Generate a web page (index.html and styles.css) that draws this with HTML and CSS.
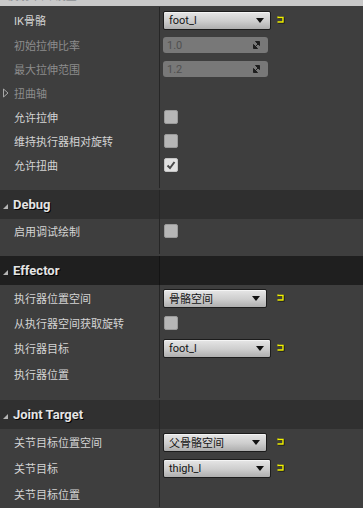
FILE: index.html
```html
<!DOCTYPE html>
<html lang="zh">
<head>
<meta charset="utf-8">
<link rel="stylesheet" href="styles.css">
</head>
<body>
<div class="topbar"><span class="topbar-text">反射平面 设置</span></div>

<div class="section first">
  <div class="row r26">
    <div class="name">IK骨骼</div>
    <div class="value">
      <div class="field"><div class="combo w108"><span>foot_l</span><i class="arrow"></i></div></div>
      <svg class="reset" width="9" height="10" viewBox="0 0 9 10"><path d="M2 2.5v-1M1.5 2.5h5.5v4.5h-5.5" fill="none" stroke="#111" stroke-width="1.6" transform="translate(0.7 0.7)"/><path d="M2 2.5v-1M1.5 2.5h5.5v4.5h-5.5" fill="none" stroke="#f2f200" stroke-width="1.4"/></svg>
    </div>
  </div>
  <div class="row">
    <div class="name dim">初始拉伸比率</div>
    <div class="value"><div class="spin"><span>1.0</span><svg class="spin-ico" width="7" height="8" viewBox="0 0 7 8"><path d="M2.5 0.5h4v4z M0.5 3.5v4h4z M1.5 6.5l4-4" fill="#1e1e1e" stroke="#1e1e1e" stroke-width="1"/></svg></div></div>
  </div>
  <div class="row">
    <div class="name dim">最大拉伸范围</div>
    <div class="value"><div class="spin"><span>1.2</span><svg class="spin-ico" width="7" height="8" viewBox="0 0 7 8"><path d="M2.5 0.5h4v4z M0.5 3.5v4h4z M1.5 6.5l4-4" fill="#1e1e1e" stroke="#1e1e1e" stroke-width="1"/></svg></div></div>
  </div>
  <div class="row">
    <div class="name dim expander"><svg class="exp-ico" width="6" height="10" viewBox="0 0 6 10"><path d="M0.5 1v8l4.5-4z" fill="none" stroke="#a8a8a8" stroke-width="1"/></svg>扭曲轴</div>
    <div class="value"></div>
  </div>
  <div class="row">
    <div class="name">允许拉伸</div>
    <div class="value"><div class="check"></div></div>
  </div>
  <div class="row">
    <div class="name">维持执行器相对旋转</div>
    <div class="value"><div class="check"></div></div>
  </div>
  <div class="row">
    <div class="name">允许扭曲</div>
    <div class="value"><div class="check on"><svg width="12" height="12" viewBox="0 0 12 12"><path d="M2.5 6.5l2.5 2.5 4.5-6" fill="none" stroke="#4a4a4a" stroke-width="2"/></svg></div></div>
  </div>
</div>

<div class="section">
  <div class="header h-debug"><i class="tri"></i>Debug</div>
  <div class="row">
    <div class="name">启用调试绘制</div>
    <div class="value"><div class="check"></div></div>
  </div>
</div>

<div class="section">
  <div class="header h-effector"><i class="tri"></i>Effector</div>
  <div class="row r26">
    <div class="name">执行器位置空间</div>
    <div class="value">
      <div class="field"><div class="combo w104"><span>骨骼空间</span><i class="arrow"></i></div></div>
      <svg class="reset" width="9" height="10" viewBox="0 0 9 10"><path d="M2 2.5v-1M1.5 2.5h5.5v4.5h-5.5" fill="none" stroke="#111" stroke-width="1.6" transform="translate(0.7 0.7)"/><path d="M2 2.5v-1M1.5 2.5h5.5v4.5h-5.5" fill="none" stroke="#f2f200" stroke-width="1.4"/></svg>
    </div>
  </div>
  <div class="row">
    <div class="name">从执行器空间获取旋转</div>
    <div class="value"><div class="check"></div></div>
  </div>
  <div class="row r26">
    <div class="name">执行器目标</div>
    <div class="value">
      <div class="field"><div class="combo w108"><span>foot_l</span><i class="arrow"></i></div></div>
      <svg class="reset" width="9" height="10" viewBox="0 0 9 10"><path d="M2 2.5v-1M1.5 2.5h5.5v4.5h-5.5" fill="none" stroke="#111" stroke-width="1.6" transform="translate(0.7 0.7)"/><path d="M2 2.5v-1M1.5 2.5h5.5v4.5h-5.5" fill="none" stroke="#f2f200" stroke-width="1.4"/></svg>
    </div>
  </div>
  <div class="row r26">
    <div class="name">执行器位置</div>
    <div class="value"></div>
  </div>
</div>

<div class="section last">
  <div class="header h-joint"><i class="tri"></i>Joint Target</div>
  <div class="row r26">
    <div class="name">关节目标位置空间</div>
    <div class="value">
      <div class="field"><div class="combo w104"><span>父骨骼空间</span><i class="arrow"></i></div></div>
      <svg class="reset" width="9" height="10" viewBox="0 0 9 10"><path d="M2 2.5v-1M1.5 2.5h5.5v4.5h-5.5" fill="none" stroke="#111" stroke-width="1.6" transform="translate(0.7 0.7)"/><path d="M2 2.5v-1M1.5 2.5h5.5v4.5h-5.5" fill="none" stroke="#f2f200" stroke-width="1.4"/></svg>
    </div>
  </div>
  <div class="row r26">
    <div class="name">关节目标</div>
    <div class="value">
      <div class="field"><div class="combo w108"><span>thigh_l</span><i class="arrow"></i></div></div>
      <svg class="reset" width="9" height="10" viewBox="0 0 9 10"><path d="M2 2.5v-1M1.5 2.5h5.5v4.5h-5.5" fill="none" stroke="#111" stroke-width="1.6" transform="translate(0.7 0.7)"/><path d="M2 2.5v-1M1.5 2.5h5.5v4.5h-5.5" fill="none" stroke="#f2f200" stroke-width="1.4"/></svg>
    </div>
  </div>
  <div class="row r26">
    <div class="name">关节目标位置</div>
    <div class="value"></div>
  </div>
</div>
</body>
</html>
```

FILE: styles.css
```css
html, body {
  margin: 0;
  padding: 0;
  background: #3e3e3e;
  height: 100%;
  overflow: hidden;
}
body {
  font-family: Roboto, "Noto Sans CJK SC", sans-serif;
  font-size: 11px;
  color: #d4d4d4;
}
.topbar {
  height: 6px;
  background: #c9c9c9;
  overflow: hidden;
  padding-left: 8px;
  margin-bottom: 1px;
}
.topbar-text {
  display: block;
  margin-top: -9px;
  line-height: 12px;
  color: #8e9296;
  font-size: 11px;
}
.section {
  --split: linear-gradient(to right, transparent 159px, #262626 159px, #262626 160px, transparent 160px);
  background: var(--split), #3e3e3e;
  padding-bottom: 11px;
  margin-bottom: 2px;
}
.section.last {
  padding-bottom: 0;
  margin-bottom: 0;
}
.header {
  height: 29px;
  display: flex;
  align-items: center;
  font-weight: bold;
  font-size: 13px;
  color: #e4e4e4;
  text-shadow: 1px 1px 0 #000;
  padding-left: 3px;
  gap: 5px;
}
.h-debug { background: var(--split), #2f2f2f; }
.h-effector { background: linear-gradient(to right, transparent 159px, #141414 159px, #141414 160px, transparent 160px), #1f1f1f; }
.h-joint { background: var(--split), #303030; }
.tri {
  width: 0;
  height: 0;
  border-left: 5px solid transparent;
  border-bottom: 5px solid #b4b4b4;
  margin-top: 4px;
}
.row {
  height: 24px;
  display: flex;
  align-items: center;
}
.row.r26 { height: 26px; }
.name {
  width: 160px;
  box-sizing: border-box;
  padding-left: 14px;
  white-space: nowrap;
  display: flex;
  align-items: center;
}
.name.dim { color: #8c8c8c; }
.name.expander { padding-left: 3px; }
.exp-ico { margin-right: 5px; }
.value {
  display: flex;
  align-items: center;
  padding-left: 3px;
}
.field {
  width: 113px;
  display: flex;
}
.combo {
  height: 19px;
  box-sizing: border-box;
  border: 1px solid #1c1c1c;
  border-radius: 2px;
  background: linear-gradient(#e6e6e6, #cdcdcd 55%, #aeaeae);
  box-shadow: inset 0 1px 0 #f4f4f4;
  display: flex;
  align-items: center;
  justify-content: space-between;
  padding: 0 6px 0 5px;
  color: #151515;
  font-size: 11px;
}
.w108 { width: 108px; }
.w104 { width: 104px; }
.arrow {
  width: 0;
  height: 0;
  border-left: 4px solid transparent;
  border-right: 4px solid transparent;
  border-top: 5px solid #111;
}
.reset { display: block; margin-top: -1px; }
.spin {
  width: 105px;
  height: 16px;
  box-sizing: border-box;
  border-radius: 3px;
  background: #787878;
  display: flex;
  align-items: center;
  justify-content: space-between;
  padding: 0 8px 0 4px;
  color: #505050;
  font-size: 11px;
}
.spin-ico { display: block; }
.check {
  width: 14px;
  height: 14px;
  box-sizing: border-box;
  margin-left: 1px;
  border-radius: 2px;
  background: #b6b6b6;
  border: 1px solid #9a9a9a;
  display: flex;
  align-items: center;
  justify-content: center;
}
.check.on { background: #e2e2e2; border-color: #c4c4c4; }
```
